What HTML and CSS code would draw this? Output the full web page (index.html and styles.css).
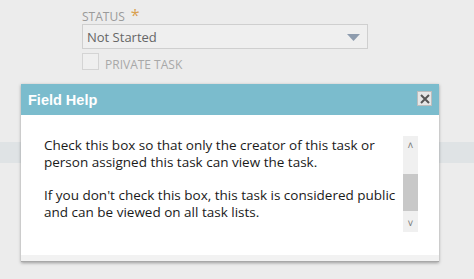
FILE: index.html
```html
<!DOCTYPE html>
<html>
<head>
<meta charset="utf-8">
<link rel="stylesheet" href="styles.css">
</head>
<body>
<div class="page">
  <div class="form">
    <div class="label">STATUS <span class="req">*</span></div>
    <div class="select">
      <span>Not Started</span>
      <svg class="arrow" width="13" height="7" viewBox="0 0 13 7"><path d="M0 0 H13 L6.5 7 Z" fill="#8e9cae"/></svg>
    </div>
    <div class="check-row">
      <span class="box"></span>
      <span class="check-label">PRIVATE TASK</span>
    </div>
  </div>
  <div class="band"></div>
  <div class="dialog">
    <div class="dlg-head">
      <span class="title">Field Help</span>
      <span class="close"><svg width="10" height="10" viewBox="0 0 10 10"><path d="M1 1 L9 9 M9 1 L1 9" stroke="#555" stroke-width="2"/></svg></span>
    </div>
    <div class="dlg-body">
      <div class="content">
        <p>Check this box so that only the creator of this task or person assigned this task can view the task.</p>
        <p>If you don't check this box, this task is considered public and can be viewed on all task lists.</p>
      </div>
      <div class="scroll">
        <span class="sarrow up">&#x2C4;</span>
        <span class="thumb"></span>
        <span class="sarrow down">&#x2C5;</span>
      </div>
    </div>
    <div class="dlg-foot"></div>
  </div>
</div>
</body>
</html>
```
FILE: styles.css
```css
html, body {
  margin: 0;
  padding: 0;
  background: #ececec;
}
.page {
  position: relative;
  width: 474px;
  height: 279px;
  overflow: hidden;
  font-family: "Open Sans", "Liberation Sans", sans-serif;
}
.form {
  padding: 6px 0 0 82px;
  width: 286px;
}
.label {
  font-size: 12px;
  color: #9a9a9a;
  height: 18px;
  line-height: 18px;
}
.req {
  color: #d9a050;
  font-size: 16px;
  margin-left: 3px;
}
.select {
  height: 23px;
  border: 1px solid #cfcfcf;
  background: #efefef;
  display: flex;
  align-items: center;
  justify-content: space-between;
  padding: 0 7px 0 4px;
  font-size: 13px;
  color: #666;
}
.arrow {
  margin-top: 1px;
}
.check-row {
  display: flex;
  align-items: center;
  margin-top: 3px;
  height: 18px;
}
.box {
  width: 15px;
  height: 15px;
  border: 1px solid #d4d4d4;
  background: #efefef;
}
.check-label {
  font-size: 12px;
  color: #a8a8a8;
  margin-left: 6px;
  margin-top: 6px;
}
.band {
  position: absolute;
  left: 0;
  right: 0;
  top: 142px;
  height: 21px;
  background: #dfe3e5;
}
.dialog {
  position: absolute;
  left: 21px;
  top: 84px;
  width: 418px;
  background: #fff;
  box-shadow: 0 1px 3px rgba(0,0,0,0.35);
}
.dlg-head {
  height: 31px;
  background: #7bbccd;
  display: flex;
  align-items: center;
  justify-content: space-between;
  padding: 0 7px 0 7px;
}
.title {
  color: #fff;
  font-weight: bold;
  font-size: 14.5px;
  font-family: "Liberation Sans", "Open Sans", sans-serif;
}
.close {
  width: 13px;
  height: 13px;
  background: #e6e6e6;
  border: 1px solid #bdbdbd;
  display: flex;
  align-items: center;
  justify-content: center;
  margin-top: -2px;
}
.dlg-body {
  display: flex;
  padding: 22px 21px 22px 23px;
  height: 96px;
}
.content {
  flex: 1;
  font-size: 13.5px;
  color: #1a1a1a;
  line-height: 17px;
}
.content p {
  margin: 0 0 16px 0;
}
.scroll {
  width: 15px;
  height: 96px;
  margin-top: -1px;
  background: #f0f0f0;
  display: flex;
  flex-direction: column;
  align-items: center;
}
.sarrow {
  font-size: 10px;
  color: #777;
  height: 18px;
  line-height: 18px;
}
.thumb {
  width: 15px;
  height: 37px;
  margin-top: 20px;
  background: #c8c8c8;
}
.sarrow.down {
  margin-top: 3px;
}
.dlg-foot {
  height: 6px;
  background: #f2f2f2;
  border-bottom: 1px solid #a8a8a8;
}
```
